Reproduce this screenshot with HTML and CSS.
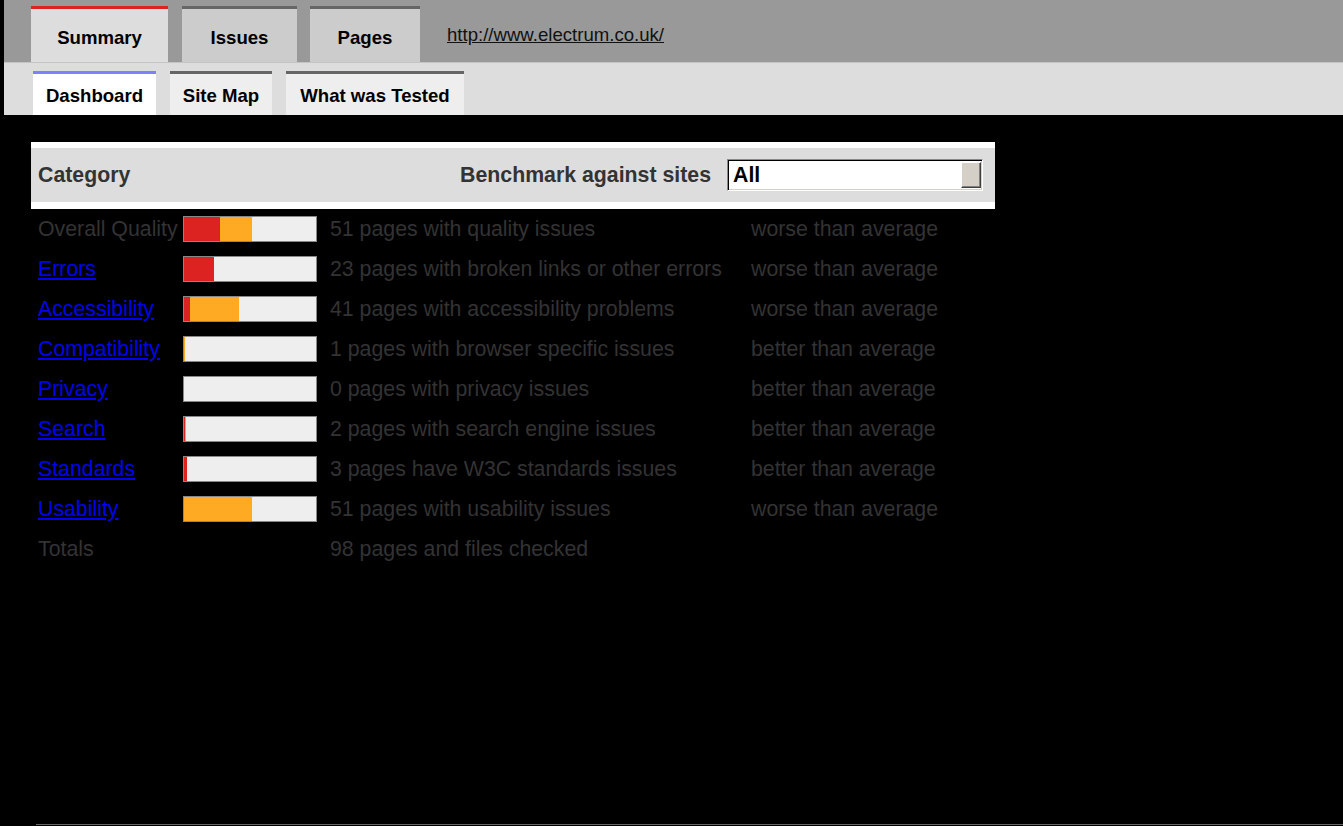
FILE: index.html
```
<!DOCTYPE html>
<html lang="en">
<head>
	<meta charset="UTF-8">
	<title>Summary - Dashboard</title>
	<link rel="stylesheet" href="styles.css">
</head>
<body>
	<div class="header">
		<div class="topbar">
			<div class="tab tab-active tab-summary">Summary</div>
			<div class="tab tab-issues">Issues</div>
			<div class="tab tab-pages">Pages</div>
			<a class="site-url" href="#">http://www.electrum.co.uk/</a>
		</div>
		<div class="subbar">
			<div class="subtab subtab-active sub-dash">Dashboard</div>
			<div class="subtab sub-map">Site Map</div>
			<div class="subtab sub-tested">What was Tested</div>
		</div>
	</div>

	<div class="dashboard">
		<div class="dash-head">
			<div class="head-label">Category</div>
			<div class="head-bench">
				<span>Benchmark against sites</span>
				<div class="select">
					<span class="select-value">All</span>
					<span class="select-btn"></span>
				</div>
			</div>
		</div>

		<div class="row">
			<div>Overall Quality</div>
			<div class="bar"><span class="seg red" style="width:36px"></span><span class="seg orange" style="width:32px"></span></div>
			<div>51 pages with quality issues</div>
			<div>worse than average</div>
		</div>
		<div class="row">
			<div><a href="#">Errors</a></div>
			<div class="bar"><span class="seg red" style="width:30px"></span></div>
			<div>23 pages with broken links or other errors</div>
			<div>worse than average</div>
		</div>
		<div class="row">
			<div><a href="#">Accessibility</a></div>
			<div class="bar"><span class="seg red" style="width:6px"></span><span class="seg orange" style="width:49px"></span></div>
			<div>41 pages with accessibility problems</div>
			<div>worse than average</div>
		</div>
		<div class="row">
			<div><a href="#">Compatibility</a></div>
			<div class="bar"><span class="seg orange" style="width:1px"></span></div>
			<div>1 pages with browser specific issues</div>
			<div>better than average</div>
		</div>
		<div class="row">
			<div><a href="#">Privacy</a></div>
			<div class="bar"></div>
			<div>0 pages with privacy issues</div>
			<div>better than average</div>
		</div>
		<div class="row">
			<div><a href="#">Search</a></div>
			<div class="bar"><span class="seg red" style="width:1px"></span><span class="seg orange" style="width:1px"></span></div>
			<div>2 pages with search engine issues</div>
			<div>better than average</div>
		</div>
		<div class="row">
			<div><a href="#">Standards</a></div>
			<div class="bar"><span class="seg red" style="width:3px"></span></div>
			<div>3 pages have W3C standards issues</div>
			<div>better than average</div>
		</div>
		<div class="row">
			<div><a href="#">Usability</a></div>
			<div class="bar"><span class="seg orange" style="width:68px"></span></div>
			<div>51 pages with usability issues</div>
			<div>worse than average</div>
		</div>
		<div class="row">
			<div>Totals</div>
			<div></div>
			<div>98 pages and files checked</div>
			<div></div>
		</div>
	</div>

	<div class="footer"></div>
</body>
</html>
```

FILE: styles.css
```
body {
	margin: 0;
	background: #000;
	font-family: "Liberation Sans", Arial, sans-serif;
	color: #333;
}

/* top tabs */
.header {
	margin-left: 4px;
}
.topbar {
	display: flex;
	height: 63px;
	box-sizing: border-box;
	padding: 6px 0 0 27px;
	background: #999;
	border-bottom: 1px solid #c4c4c4;
}
.tab {
	height: 56px;
	box-sizing: border-box;
	padding-top: 18px;
	border-top: 3px solid #666;
	background: #ccc;
	color: #000;
	font-size: 18.6px;
	font-weight: bold;
	line-height: 22px;
	text-align: center;
}
.tab-summary {
	width: 137px;
	margin-right: 14px;
}
.tab-issues {
	width: 115px;
	margin-right: 13px;
}
.tab-pages {
	width: 110px;
}
.tab-active {
	background: #ddd;
	border-top-color: #dd2222;
}
.site-url {
	margin: 18px 0 0 27px;
	font-size: 18.6px;
	line-height: 22px;
	color: #111;
	height: 22px;
}
.subbar {
	display: flex;
	height: 52px;
	box-sizing: border-box;
	padding: 8px 0 0 29px;
	background: #ddd;
}
.subtab {
	height: 44px;
	box-sizing: border-box;
	margin-right: 14px;
	padding-top: 11px;
	border-top: 3px solid #666;
	background: #eee;
	color: #000;
	font-size: 18.6px;
	font-weight: bold;
	line-height: 22px;
	text-align: center;
}
.sub-dash {
	width: 123px;
}
.sub-map {
	width: 102px;
}
.sub-tested {
	width: 178px;
}
.subtab-active {
	background: #fff;
	border-top-color: #8080ff;
}

/* dashboard table */
.dashboard {
	width: 964px;
	margin: 27px 0 0 31px;
	font-size: 21.3px;
}
.dash-head {
	display: flex;
	align-items: center;
	justify-content: space-between;
	height: 67px;
	box-sizing: border-box;
	padding: 0 12px 0 7px;
	background: #ddd;
	border-top: 6px solid #fff;
	border-bottom: 7px solid #fff;
	font-weight: bold;
}
.head-bench {
	display: flex;
	align-items: center;
}
.select {
	display: flex;
	justify-content: space-between;
	width: 256px;
	height: 32px;
	box-sizing: border-box;
	margin-left: 16px;
	background: #fff;
	border: 1px solid;
	border-color: #888 #fff #fff #888;
	box-shadow: inset 1px 1px #000, inset -1px -1px #d4d0c8;
	color: #000;
}
.select-value {
	padding: 3px 0 0 5px;
	line-height: 24px;
	font-weight: bold;
}
.select-btn {
	width: 20px;
	height: 26px;
	margin: 2px 1px 0 0;
	box-sizing: border-box;
	background: #d4d0c8;
	border: 1px solid;
	border-color: #fff #404040 #404040 #fff;
	box-shadow: inset -1px -1px #808080;
}
.row {
	display: grid;
	grid-template-columns: 145px 147px 421px auto;
	align-items: center;
	height: 40px;
	padding-left: 7px;
	white-space: nowrap;
}
.row a {
	color: #0000ee;
}
.bar {
	display: flex;
	width: 134px;
	height: 26px;
	box-sizing: border-box;
	border: 1px solid #888;
	background: #eee;
}
.seg {
	height: 100%;
}
.red {
	background: #dd2222;
}
.orange {
	background: #ffaa22;
}
.footer {
	margin: 255px 0 0 36px;
	border-top: 1px solid #666;
}
```
